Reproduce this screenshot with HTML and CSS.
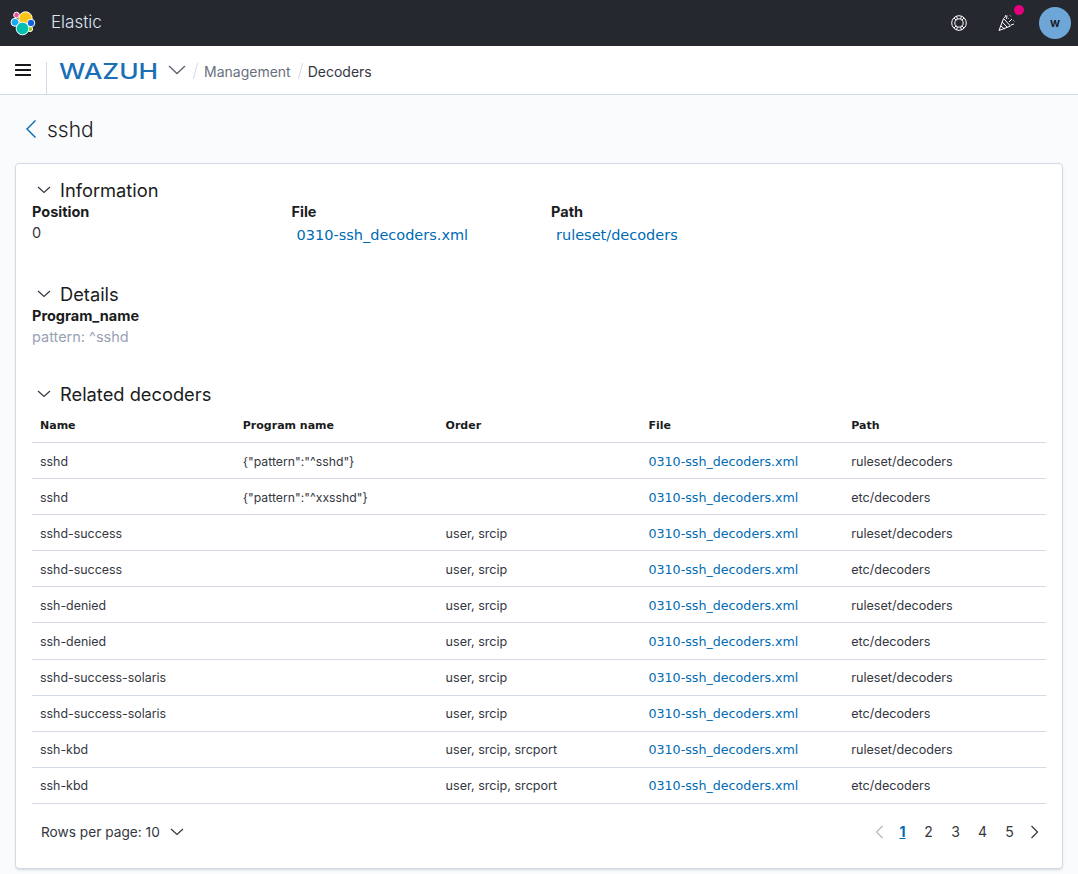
FILE: index.html
```html
<!DOCTYPE html>
<html lang="en">
<head>
  <meta charset="UTF-8">
  <meta name="viewport" content="width=device-width, initial-scale=1.0">
  <title>Decoders</title>
  <link rel="stylesheet" href="styles.css">
</head>
<body>
  <header class="top-bar">
    <svg class="elastic-logo" width="26" height="26" viewBox="0 0 26 26">
      <circle cx="15.500" cy="8.500" r="6.700" fill="#fec514" stroke="#fff" stroke-width="1"/>
      <circle cx="6.500" cy="5" r="2.800" fill="#f04e98" stroke="#fff" stroke-width="1"/>
      <circle cx="5" cy="12.300" r="4" fill="#1ba9f5" stroke="#fff" stroke-width="1"/>
      <circle cx="21" cy="13" r="3.800" fill="#0b64dd" stroke="#fff" stroke-width="1"/>
      <circle cx="20" cy="19" r="2.600" fill="#93c90e" stroke="#fff" stroke-width="1"/>
      <circle cx="12.500" cy="18.500" r="6.300" fill="#00bfb3" stroke="#fff" stroke-width="1"/>
    </svg>
    <span class="brand">Elastic</span>
    <div class="top-actions">
      <svg class="top-icon" width="16" height="16" viewBox="0 0 16 16" fill="none" stroke="#fff" stroke-width="1">
        <circle cx="8" cy="8" r="7.300"/>
        <circle cx="8" cy="8" r="4.200"/>
        <path d="M3 3l2.200 2.200M13 3l-2.200 2.200M3 13l2.200-2.200M13 13l-2.200-2.200M5.500 1.200l1 3M10.500 1.200l-1 3M5.500 14.800l1-3M10.500 14.800l-1-3"/>
      </svg>
      <div class="news">
        <svg width="18" height="18" viewBox="0 0 18 18" fill="none" stroke="#fff" stroke-width="1">
          <path d="M1 16.500L5.500 4.500l7 7.500z"/>
          <path d="M2.800 11.800l3.600 3.200M4.200 8l5 5.200M9 1.500l-.5 3.500M6.500 4L8 1M11 8l3-3M13 11l3-1M12 1.500l.8.800M15.500 6.500l.8.800M10.500 4.500l.5.500"/>
        </svg>
        <span class="news-dot"></span>
      </div>
      <div class="avatar">w</div>
    </div>
  </header>

  <nav class="sub-bar">
    <button class="menu-btn" aria-label="Menu">
      <svg width="16" height="12" viewBox="0 0 16 12" fill="#16171c">
        <rect width="16" height="2" rx="0.500"/>
        <rect y="5" width="16" height="2" rx="0.500"/>
        <rect y="10" width="16" height="2" rx="0.500"/>
      </svg>
    </button>
    <span class="wazuh-logo">WAZUH</span>
    <svg class="logo-chevron" width="18" height="10" viewBox="0 0 18 10" fill="none" stroke="#5a6270" stroke-width="1.300">
      <path d="M1 1l8 7.500L17 1"/>
    </svg>
    <span class="crumb-sep"></span>
    <span class="crumb">Management</span>
    <span class="crumb-sep crumb-sep-last"></span>
    <span class="crumb crumb-current">Decoders</span>
  </nav>

  <main class="page">
    <div class="page-title">
      <svg width="12" height="20" viewBox="0 0 12 20" fill="none" stroke="#006bb4" stroke-width="1.400">
        <path d="M10.500 1.500L2 10l8.500 8.500"/>
      </svg>
      <h1>sshd</h1>
    </div>

    <section class="card">
      <div class="section-head">
        <svg width="14" height="8" viewBox="0 0 14 8" fill="none" stroke="#343741" stroke-width="1.200"><path d="M1 1l6 5.500L13 1"/></svg>
        <h2>Information</h2>
      </div>
      <div class="info-row">
        <div class="info-col">
          <div class="info-label">Position</div>
          <div class="info-value">0</div>
        </div>
        <div class="info-col">
          <div class="info-label">File</div>
          <a class="info-link" href="#">0310-ssh_decoders.xml</a>
        </div>
        <div class="info-col">
          <div class="info-label">Path</div>
          <a class="info-link" href="#">ruleset/decoders</a>
        </div>
      </div>

      <div class="section-head details-head">
        <svg width="14" height="8" viewBox="0 0 14 8" fill="none" stroke="#343741" stroke-width="1.200"><path d="M1 1l6 5.500L13 1"/></svg>
        <h2>Details</h2>
      </div>
      <div class="info-label">Program_name</div>
      <div class="info-muted">pattern: ^sshd</div>

      <div class="section-head related-head">
        <svg width="14" height="8" viewBox="0 0 14 8" fill="none" stroke="#343741" stroke-width="1.200"><path d="M1 1l6 5.500L13 1"/></svg>
        <h2>Related decoders</h2>
      </div>
      <table class="decoders">
        <thead>
          <tr><th>Name</th><th>Program name</th><th>Order</th><th>File</th><th>Path</th></tr>
        </thead>
        <tbody>
          <tr><td>sshd</td><td>{"pattern":"^sshd"}</td><td></td><td><a href="#">0310-ssh_decoders.xml</a></td><td>ruleset/decoders</td></tr>
          <tr><td>sshd</td><td>{"pattern":"^xxsshd"}</td><td></td><td><a href="#">0310-ssh_decoders.xml</a></td><td>etc/decoders</td></tr>
          <tr><td>sshd-success</td><td></td><td>user, srcip</td><td><a href="#">0310-ssh_decoders.xml</a></td><td>ruleset/decoders</td></tr>
          <tr><td>sshd-success</td><td></td><td>user, srcip</td><td><a href="#">0310-ssh_decoders.xml</a></td><td>etc/decoders</td></tr>
          <tr><td>ssh-denied</td><td></td><td>user, srcip</td><td><a href="#">0310-ssh_decoders.xml</a></td><td>ruleset/decoders</td></tr>
          <tr><td>ssh-denied</td><td></td><td>user, srcip</td><td><a href="#">0310-ssh_decoders.xml</a></td><td>etc/decoders</td></tr>
          <tr><td>sshd-success-solaris</td><td></td><td>user, srcip</td><td><a href="#">0310-ssh_decoders.xml</a></td><td>ruleset/decoders</td></tr>
          <tr><td>sshd-success-solaris</td><td></td><td>user, srcip</td><td><a href="#">0310-ssh_decoders.xml</a></td><td>etc/decoders</td></tr>
          <tr><td>ssh-kbd</td><td></td><td>user, srcip, srcport</td><td><a href="#">0310-ssh_decoders.xml</a></td><td>ruleset/decoders</td></tr>
          <tr><td>ssh-kbd</td><td></td><td>user, srcip, srcport</td><td><a href="#">0310-ssh_decoders.xml</a></td><td>etc/decoders</td></tr>
        </tbody>
      </table>
      <div class="table-foot">
        <div class="rows-per-page">
          <span>Rows per page: 10</span>
          <svg width="14" height="8" viewBox="0 0 14 8" fill="none" stroke="#343741" stroke-width="1.200"><path d="M1 1l6 5.500L13 1"/></svg>
        </div>
        <div class="pager">
          <svg width="9" height="14" viewBox="0 0 9 14" fill="none" stroke="#b4b9c2" stroke-width="1.200"><path d="M7.500 1L1.500 7l6 6"/></svg>
          <span class="page-num page-current">1</span>
          <span class="page-num">2</span>
          <span class="page-num">3</span>
          <span class="page-num">4</span>
          <span class="page-num">5</span>
          <svg class="pager-next" width="9" height="14" viewBox="0 0 9 14" fill="none" stroke="#343741" stroke-width="1.200"><path d="M1.500 1l6 6-6 6"/></svg>
        </div>
      </div>
    </section>
  </main>
</body>
</html>
```

FILE: styles.css
```css
* {
  box-sizing: border-box;
}

html, body {
  height: 874px;
  overflow: hidden;
}

body {
  margin: 0;
  font-family: Inter, "Liberation Sans", sans-serif;
  font-size: 14px;
  color: #343741;
  background-color: #fafbfd;
}

.top-bar {
  display: flex;
  align-items: center;
  height: 46px;
  padding: 0 7px 0 10px;
  background-color: #25282f;
}

.elastic-logo {
  display: block;
}

.brand {
  margin: -2px 0 0 15px;
  font-size: 17px;
  font-weight: 300;
  color: #dfe5ef;
}

.top-actions {
  display: flex;
  align-items: center;
  margin-left: auto;
}

.top-icon {
  margin-right: 31px;
}

.news {
  position: relative;
  display: flex;
  margin-right: 23px;
}

.news-dot {
  position: absolute;
  top: -9px;
  right: -8px;
  width: 10px;
  height: 10px;
  border-radius: 50%;
  background-color: #e6007e;
}

.avatar {
  width: 32px;
  height: 32px;
  border-radius: 50%;
  background-color: #6ea6d8;
  color: #16171c;
  font-size: 12px;
  font-weight: 600;
  line-height: 32px;
  text-align: center;
}

.sub-bar {
  display: flex;
  align-items: center;
  height: 49px;
  background-color: #fff;
  border-bottom: 1px solid #d3dae6;
}

.menu-btn {
  display: flex;
  align-items: center;
  justify-content: center;
  align-self: stretch;
  width: 47px;
  margin-top: 16px;
  padding: 0 0 16px;
  background: none;
  border: none;
  border-right: 1px solid #d3dae6;
}

.wazuh-logo {
  width: 98px;
  margin: 2px 0 0 12px;
  font-size: 21px;
  font-weight: 500;
  line-height: 1;
  color: #1a6fb5;
  transform: scaleX(1.250);
  transform-origin: left center;
}

.logo-chevron {
  margin-left: 11px;
}

.crumb-sep {
  width: 1px;
  height: 16px;
  margin: 2px 8px 0 9px;
  background-color: #d3dae6;
  transform: skewX(-15deg);
}

.crumb-sep-last {
  margin-right: 7px;
}

.crumb {
  padding-top: 2px;
  color: #69707d;
}

.crumb-current {
  color: #343741;
  font-weight: 400;
}

.page {
  padding: 0 15px;
}

.page-title {
  display: flex;
  align-items: center;
  gap: 10px;
  height: 68px;
  padding-left: 10px;
}

.page-title h1 {
  margin: 0;
  font-size: 21px;
  font-weight: 300;
  color: #1a1c21;
}

.card {
  height: 706px;
  padding: 15px 16px;
  background-color: #fff;
  border: 1px solid #d3dae6;
  border-radius: 4px;
  box-shadow: 0 2px 2px -1px rgba(152, 162, 179, 0.3), 0 1px 5px -2px rgba(152, 162, 179, 0.3);
}

.section-head {
  display: flex;
  align-items: center;
  gap: 9px;
  height: 22px;
  padding-left: 5px;
}

.section-head h2 {
  margin: 0;
  font-size: 18.300px;
  font-weight: 400;
  color: #1a1c21;
}

.info-row {
  display: flex;
}

.info-col {
  width: 259.500px;
}

.info-label {
  margin-top: 1px;
  font-size: 14.500px;
  font-weight: 700;
  line-height: 20px;
  color: #1a1c21;
}

.info-value {
  font-size: 14.500px;
  line-height: 22px;
  color: #343741;
}

.info-link {
  display: block;
  padding: 3px 0 0 5px;
  font-family: "DejaVu Sans", sans-serif;
  font-size: 14.500px;
  line-height: 20px;
  color: #006bb4;
  text-decoration: none;
}

.details-head {
  margin-top: 38px;
}

.info-muted {
  font-size: 14.500px;
  line-height: 22px;
  color: #98a2b3;
}

.related-head {
  margin-top: 35px;
}

.decoders {
  width: 100%;
  margin-top: 1px;
  border-collapse: collapse;
  table-layout: fixed;
  font-size: 12.250px;
}

.decoders th {
  height: 36px;
  padding: 4px 8px 0;
  font-family: "DejaVu Sans", sans-serif;
  font-size: 11px;
  font-weight: 700;
  text-align: left;
  color: #1a1c21;
  border-bottom: 1px solid #d3dae6;
}

.decoders td {
  height: 36px;
  padding: 2px 8px 0;
  border-bottom: 1px solid #d3dae6;
}

.decoders tbody tr:nth-child(n+6) td {
  padding-top: 1px;
}

.decoders tbody tr:nth-child(6) td {
  height: 37px;
}

.decoders td:nth-child(1) {
  font-size: 12.400px;
}

.decoders td:nth-child(3), .decoders td:nth-child(5) {
  font-size: 12.600px;
}

.decoders a {
  font-family: "DejaVu Sans", sans-serif;
  font-size: 12.680px;
  color: #006bb4;
  text-decoration: none;
}

.table-foot {
  display: flex;
  align-items: center;
  justify-content: space-between;
  height: 56px;
  padding: 0 7px 0 9px;
}

.rows-per-page {
  display: flex;
  align-items: center;
  gap: 10px;
  font-size: 13.700px;
}

.pager {
  display: flex;
  align-items: center;
  gap: 18px;
}

.pager-next {
  margin-left: -2px;
}

.page-num {
  width: 9px;
  font-size: 14px;
  text-align: center;
  color: #343741;
}

.page-current {
  margin: 0 -1px 0 -4px;
  color: #006bb4;
  font-weight: 700;
  text-decoration: underline;
}
```
